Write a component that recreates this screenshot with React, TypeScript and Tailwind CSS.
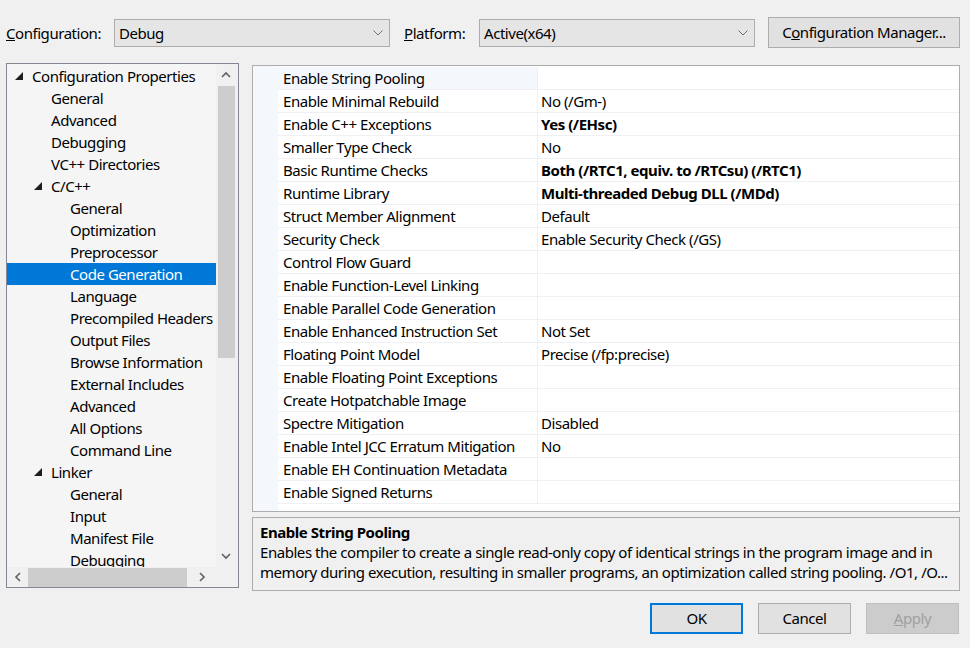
import React from 'react';

const FONT = { fontFamily: '"Noto Sans", "Segoe UI", sans-serif', letterSpacing: '-0.45px' };

type TreeNode = { label: string; level: number; expanded?: boolean; selected?: boolean };

const TREE: TreeNode[] = [
  { label: 'Configuration Properties', level: 0, expanded: true },
  { label: 'General', level: 1 },
  { label: 'Advanced', level: 1 },
  { label: 'Debugging', level: 1 },
  { label: 'VC++ Directories', level: 1 },
  { label: 'C/C++', level: 1, expanded: true },
  { label: 'General', level: 2 },
  { label: 'Optimization', level: 2 },
  { label: 'Preprocessor', level: 2 },
  { label: 'Code Generation', level: 2, selected: true },
  { label: 'Language', level: 2 },
  { label: 'Precompiled Headers', level: 2 },
  { label: 'Output Files', level: 2 },
  { label: 'Browse Information', level: 2 },
  { label: 'External Includes', level: 2 },
  { label: 'Advanced', level: 2 },
  { label: 'All Options', level: 2 },
  { label: 'Command Line', level: 2 },
  { label: 'Linker', level: 1, expanded: true },
  { label: 'General', level: 2 },
  { label: 'Input', level: 2 },
  { label: 'Manifest File', level: 2 },
  { label: 'Debugging', level: 2 },
];

const PROPS: [string, string, boolean?][] = [
  ['Enable String Pooling', ''],
  ['Enable Minimal Rebuild', 'No (/Gm-)'],
  ['Enable C++ Exceptions', 'Yes (/EHsc)', true],
  ['Smaller Type Check', 'No'],
  ['Basic Runtime Checks', 'Both (/RTC1, equiv. to /RTCsu) (/RTC1)', true],
  ['Runtime Library', 'Multi-threaded Debug DLL (/MDd)', true],
  ['Struct Member Alignment', 'Default'],
  ['Security Check', 'Enable Security Check (/GS)'],
  ['Control Flow Guard', ''],
  ['Enable Function-Level Linking', ''],
  ['Enable Parallel Code Generation', ''],
  ['Enable Enhanced Instruction Set', 'Not Set'],
  ['Floating Point Model', 'Precise (/fp:precise)'],
  ['Enable Floating Point Exceptions', ''],
  ['Create Hotpatchable Image', ''],
  ['Spectre Mitigation', 'Disabled'],
  ['Enable Intel JCC Erratum Mitigation', 'No'],
  ['Enable EH Continuation Metadata', ''],
  ['Enable Signed Returns', ''],
];

function Chevron({ dir }: { dir: 'up' | 'down' | 'left' | 'right' }) {
  const d = {
    up: 'M1 6 L5 2 L9 6',
    down: 'M1 2 L5 6 L9 2',
    left: 'M6 1 L2 5 L6 9',
    right: 'M2 1 L6 5 L2 9',
  }[dir];
  const horiz = dir === 'left' || dir === 'right';
  return (
    <svg width={horiz ? 8 : 10} height={horiz ? 10 : 8} viewBox={horiz ? '0 0 8 10' : '0 0 10 8'}>
      <path d={d} fill="none" stroke="#606060" strokeWidth="1.6" />
    </svg>
  );
}

function Combo({ value, width }: { value: string; width: string }) {
  return (
    <div className={`${width} h-[28px] flex items-center justify-between border border-[#adadad] bg-[#e5e5e5] pl-[4px] pr-[6px]`}>
      <span className="text-[15px] text-black">{value}</span>
      <svg width="10" height="6" viewBox="0 0 10 6">
        <path d="M0.5 0.5 L5 5 L9.5 0.5" fill="none" stroke="#707070" strokeWidth="1" />
      </svg>
    </div>
  );
}

function Tree() {
  return (
    <div className="w-[233px] h-[525px] mt-[-2px] border border-[#828790] bg-[#f5f5f5] flex flex-col">
      <div className="flex flex-1 min-h-0">
        <div className="w-[209px] overflow-hidden pt-[1px]">
          {TREE.map((n, i) => (
            <div
              key={i}
              className={`h-[22px] flex items-center whitespace-nowrap text-[15px] ${n.selected ? 'bg-[#0078d7] text-white' : 'text-black'}`}
              style={{ paddingLeft: 8 + n.level * 19 }}
            >
              <span className="w-[17px] shrink-0 flex items-center">
                {n.expanded && (
                  <svg width="8" height="8" viewBox="0 0 8 8">
                    <polygon points="8,0 8,8 0,8" fill="#1e1e1e" />
                  </svg>
                )}
              </span>
              {n.label}
            </div>
          ))}
        </div>
        <div className="w-[20px] bg-[#f0f0f0] flex flex-col items-center">
          <div className="h-[22px] flex items-center justify-center">
            <Chevron dir="up" />
          </div>
          <div className="w-[17px] h-[272px] bg-[#cdcdcd]" />
          <div className="flex-1" />
          <div className="h-[22px] flex items-center justify-center">
            <Chevron dir="down" />
          </div>
        </div>
        <div className="flex-1 bg-[#f0f0f0]" />
      </div>
      <div className="h-[20px] flex bg-[#f0f0f0]">
        <div className="w-[209px] flex items-center">
          <div className="w-[21px] flex justify-center">
            <Chevron dir="left" />
          </div>
          <div className="w-[159px] h-[19px] bg-[#cdcdcd]" />
          <div className="flex-1 flex justify-center">
            <Chevron dir="right" />
          </div>
        </div>
        <div className="flex-1" />
      </div>
    </div>
  );
}

function PropertyGrid() {
  return (
    <div className="h-[447px] border border-[#adadad] bg-white flex">
      <div className="w-[25px] bg-[#f4f7fc]" />
      <div className="flex-1 pt-[1px]">
        {PROPS.map(([name, value, bold], i) => (
          <div key={i} className="h-[23px] flex border-b border-[#eef0f4] text-[15px] text-black">
            <div className={`w-[259px] pl-[5px] flex items-center whitespace-nowrap ${i === 0 ? 'bg-[#f4f7fc]' : ''}`}>
              {name}
            </div>
            <div className={`flex-1 border-l border-[#eef0f4] pl-[3px] flex items-center whitespace-nowrap ${bold ? 'font-bold' : ''}`}>
              {value}
            </div>
          </div>
        ))}
      </div>
    </div>
  );
}

function Button({ children, primary, disabled }: { children: React.ReactNode; primary?: boolean; disabled?: boolean }) {
  const cls = primary
    ? 'border-2 border-[#0078d7] bg-[#e1e1e1] text-black'
    : disabled
      ? 'border border-[#bfbfbf] bg-[#cccccc] text-[#a0a0a0]'
      : 'border border-[#adadad] bg-[#e1e1e1] text-black';
  return <div className={`w-[93px] h-[31px] flex items-center justify-center text-[15px] ${cls}`}>{children}</div>;
}

export default function App() {
  return (
    <div className="w-[970px] h-[648px] bg-[#f0f0f0] overflow-hidden" style={FONT}>
      <div className="flex items-center pt-[18px] pl-[6px] h-[48px]">
        <span className="text-[15px] text-black w-[108px]">
          <span className="underline">C</span>onfiguration:
        </span>
        <Combo value="Debug" width="w-[276px]" />
        <span className="text-[15px] text-black ml-[14px] w-[75px]">
          <span className="underline">P</span>latform:
        </span>
        <Combo value="Active(x64)" width="w-[276px]" />
        <div className="ml-[13px] w-[192px] h-[31px] mt-[-2px] border border-[#adadad] bg-[#e1e1e1] flex items-center justify-center text-[15px] text-black">
          C<span className="underline">o</span>nfiguration Manager...
        </div>
      </div>
      <div className="flex pl-[6px] pt-[17px]">
        <Tree />
        <div className="ml-[13px] w-[708px] flex flex-col">
          <PropertyGrid />
          <div className="mt-[5px] h-[74px] border border-[#adadad] px-[7px] pt-[4px] text-[15px] text-black leading-[20px]">
            <div className="font-bold">Enable String Pooling</div>
            <div className="whitespace-nowrap">
              Enables the compiler to create a single read-only copy of identical strings in the program image and in
            </div>
            <div className="whitespace-nowrap">
              memory during execution, resulting in smaller programs, an optimization called string pooling. /O1, /O...
            </div>
          </div>
        </div>
      </div>
      <div className="flex justify-end gap-[15px] pr-[11px] pt-[12px]">
        <Button primary>OK</Button>
        <Button>Cancel</Button>
        <Button disabled>
          <span className="underline">A</span>pply
        </Button>
      </div>
    </div>
  );
}
